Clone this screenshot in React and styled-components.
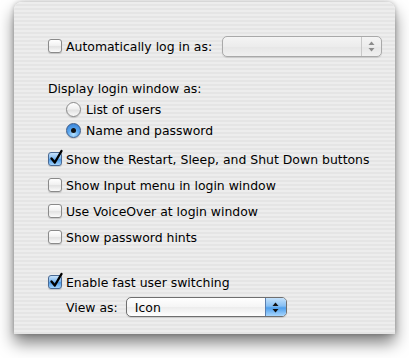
import React, { useState } from "react";
import styled, { createGlobalStyle } from "styled-components";

const GlobalStyle = createGlobalStyle`
  html, body {
    margin: 0;
    padding: 0;
    background: #ffffff;
  }
  body {
    font-family: "DejaVu Sans", "Liberation Sans", sans-serif;
    font-size: 12.45px;
    color: #000;
  }
`;

const Page = styled.div`
  width: 409px;
  height: 358px;
  overflow: hidden;
  background: #fff;
`;

const Panel = styled.div`
  margin: 2px 0 0 14px;
  width: 381px;
  height: 332px;
  box-sizing: border-box;
  padding: 33px 0 0 34px;
  border-radius: 8px 8px 0 0;
  background: repeating-linear-gradient(
    to bottom,
    #ededed 0px,
    #ededed 2px,
    #e5e5e5 2px,
    #e5e5e5 4px
  );
  box-shadow: 0 9px 16px rgba(0, 0, 0, 0.5), 0 0 5px rgba(0, 0, 0, 0.25);
  display: flex;
  flex-direction: column;
`;

const Row = styled.div`
  display: flex;
  align-items: center;
  height: ${(p) => p.$h || 26}px;
  margin-top: ${(p) => p.$mt || 0}px;
  padding-left: ${(p) => p.$indent || 0}px;
  white-space: nowrap;
`;

const Label = styled.span`
  margin-left: ${(p) => p.$ml || 0}px;
`;

const Box = styled.span`
  position: relative;
  width: 14px;
  height: 14px;
  box-sizing: border-box;
  border: 1px solid #8a8a8a;
  border-radius: 3px;
  flex: none;
  background: ${(p) =>
    p.$on
      ? "linear-gradient(to bottom, #c7e2fb 0%, #80b9ef 45%, #4d9be8 55%, #a3d3fb 100%)"
      : "linear-gradient(to bottom, #ffffff 0%, #f2f2f2 45%, #e3e3e3 55%, #fbfbfb 100%)"};
  border-color: ${(p) => (p.$on ? "#4a6a94" : "#8a8a8a")};
  box-shadow: 0 1px 1px rgba(0, 0, 0, 0.15);
`;

const Check = styled.svg`
  position: absolute;
  left: 0px;
  top: -3px;
  width: 14px;
  height: 16px;
  overflow: visible;
`;

const Radio = styled.span`
  position: relative;
  width: 15px;
  height: 15px;
  box-sizing: border-box;
  border-radius: 50%;
  border: 1px solid ${(p) => (p.$on ? "#3d5d8a" : "#8a8a8a")};
  flex: none;
  background: ${(p) =>
    p.$on
      ? "radial-gradient(circle at 50% 80%, #b6e2ff 0%, #5aa6ee 45%, #2f78d0 100%)"
      : "linear-gradient(to bottom, #ffffff 0%, #f0f0f0 45%, #e2e2e2 55%, #fafafa 100%)"};
  box-shadow: 0 1px 1px rgba(0, 0, 0, 0.15);

  &::after {
    content: "";
    display: ${(p) => (p.$on ? "block" : "none")};
    position: absolute;
    left: 4px;
    top: 4px;
    width: 5px;
    height: 5px;
    border-radius: 50%;
    background: #111;
  }
`;

const Popup = styled.div`
  position: relative;
  width: ${(p) => p.$w}px;
  height: ${(p) => p.$h}px;
  box-sizing: border-box;
  margin-left: ${(p) => p.$ml || 0}px;
  border: 1px solid ${(p) => (p.$disabled ? "#a9a9a9" : "#6f6f6f")};
  border-radius: 5px;
  background: ${(p) =>
    p.$disabled
      ? "linear-gradient(to bottom, #f4f4f4 0%, #ececec 50%, #e6e6e6 51%, #f0f0f0 100%)"
      : "linear-gradient(to bottom, #ffffff 0%, #f5f5f5 50%, #ececec 51%, #ffffff 100%)"};
  box-shadow: 0 1px 1px rgba(0, 0, 0, 0.12);
  display: flex;
  align-items: center;
  overflow: hidden;
`;

const PopupText = styled.span`
  flex: 1;
  padding-left: 8px;
`;

const Stepper = styled.span`
  width: ${(p) => (p.$disabled ? 19 : 20)}px;
  align-self: stretch;
  display: flex;
  align-items: center;
  justify-content: center;
  border-left: 1px solid ${(p) => (p.$disabled ? "#c8c8c8" : "#5a7eae")};
  background: ${(p) =>
    p.$disabled
      ? "transparent"
      : "linear-gradient(to bottom, #c4e1fb 0%, #86bff3 45%, #4f9fec 55%, #a8d6fd 100%)"};
`;

function Arrows({ color }) {
  return (
    <svg width="7" height="11" viewBox="0 0 7 11">
      <path d="M3.5 0.5 L6.5 4 L0.5 4 Z" fill={color} />
      <path d="M3.5 10.5 L6.5 7 L0.5 7 Z" fill={color} />
    </svg>
  );
}

function Checkbox({ on }) {
  return (
    <Box $on={on}>
      {on && (
        <Check viewBox="0 0 14 16">
          <path
            d="M2.5 8.5 L5.8 12.5 L12.5 1"
            fill="none"
            stroke="#000"
            strokeWidth="2.4"
            strokeLinecap="round"
            strokeLinejoin="round"
          />
        </Check>
      )}
    </Box>
  );
}

export default function App() {
  const [names] = useState([
    { text: "List of users", on: false },
    { text: "Name and password", on: true },
  ]);
  const options = [
    { text: "Show the Restart, Sleep, and Shut Down buttons", on: true },
    { text: "Show Input menu in login window", on: false },
    { text: "Use VoiceOver at login window", on: false },
    { text: "Show password hints", on: false },
  ];

  return (
    <Page>
      <GlobalStyle />
      <Panel>
        <Row $h={22}>
          <Checkbox on={false} />
          <Label $ml={4}>Automatically log in as:</Label>
          <Popup $w={160} $h={21} $ml={10} $disabled>
            <PopupText />
            <Stepper $disabled>
              <Arrows color="#8c8c8c" />
            </Stepper>
          </Popup>
        </Row>

        <Row $h={20} $mt={21}>
          <Label>Display login window as:</Label>
        </Row>
        {names.map((n, i) => (
          <Row key={n.text} $h={21} $mt={i === 0 ? 1 : 0} $indent={18}>
            <Radio $on={n.on} />
            <Label $ml={5}>{n.text}</Label>
          </Row>
        ))}

        {options.map((o, i) => (
          <Row key={o.text} $mt={i === 0 ? 5 : 0}>
            <Checkbox on={o.on} />
            <Label $ml={4}>{o.text}</Label>
          </Row>
        ))}

        <Row $mt={19}>
          <Checkbox on />
          <Label $ml={4}>Enable fast user switching</Label>
        </Row>
        <Row $h={22} $mt={1} $indent={18}>
          <Label>View as:</Label>
          <Popup $w={161} $h={20} $ml={8}>
            <PopupText>Icon</PopupText>
            <Stepper>
              <Arrows color="#111" />
            </Stepper>
          </Popup>
        </Row>
      </Panel>
    </Page>
  );
}
